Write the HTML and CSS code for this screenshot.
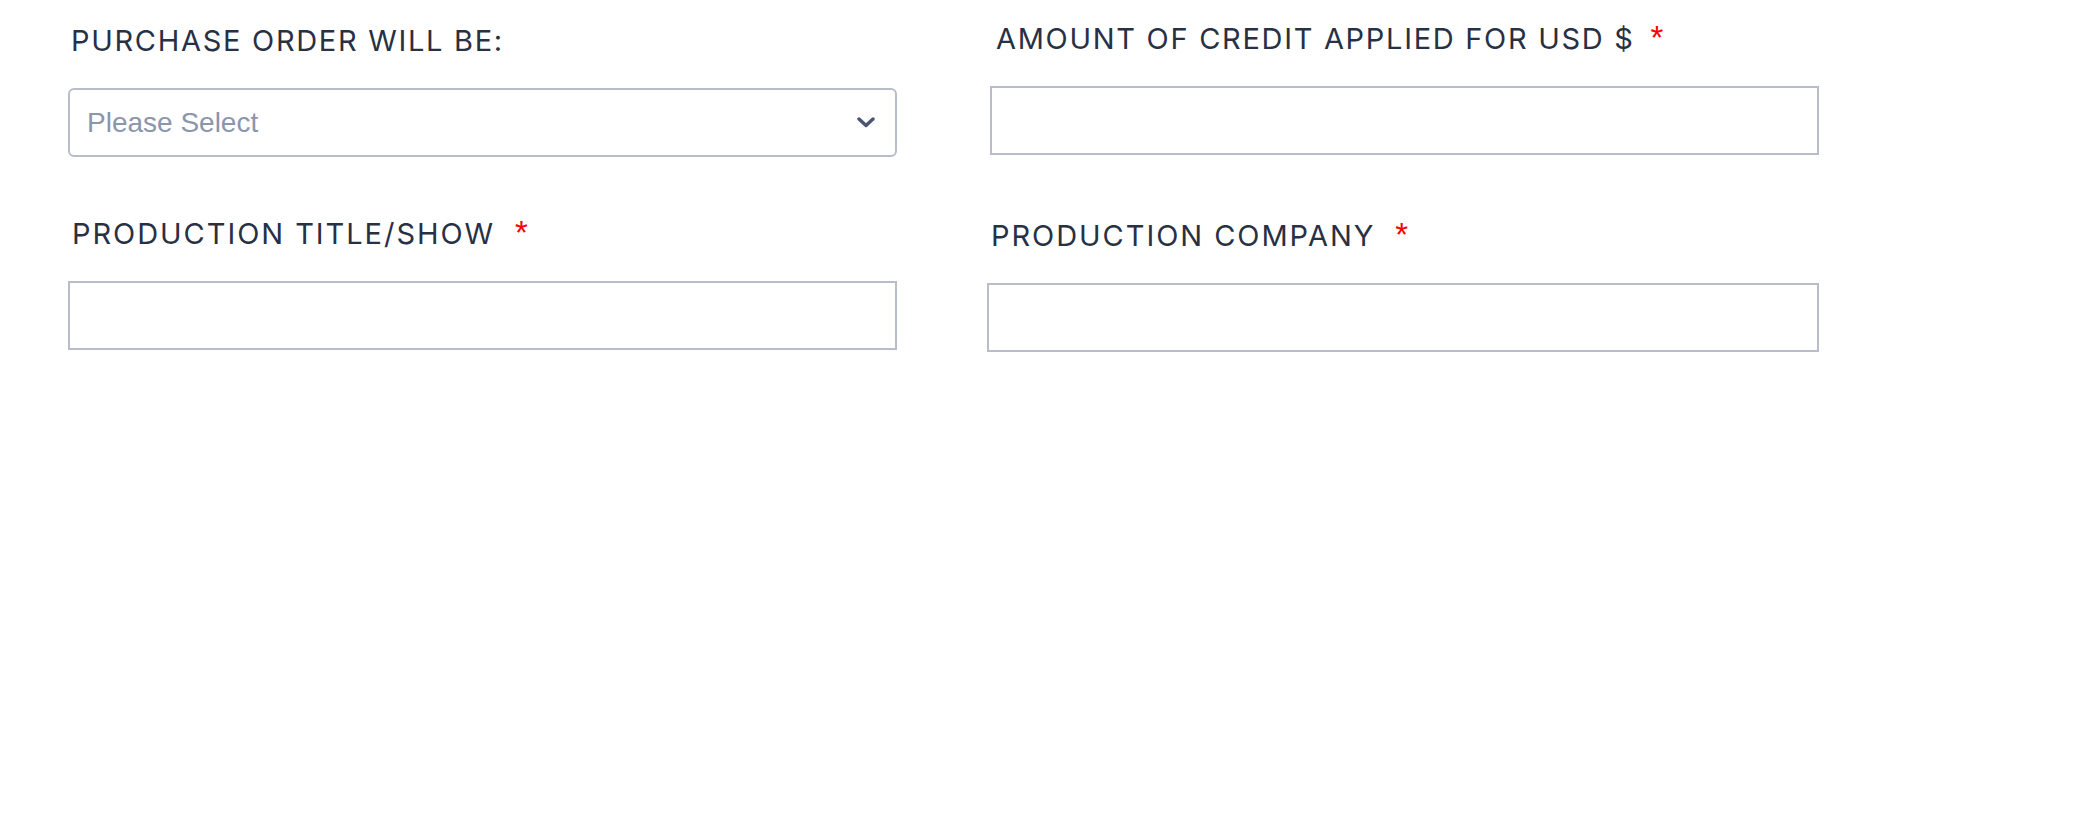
FILE: index.html
```html
<!DOCTYPE html>
<html lang="en">
<head>
<meta charset="utf-8">
<title>Form</title>
<link rel="stylesheet" href="styles.css">
</head>
<body>
<form class="form">
  <div class="col col-left">
    <div class="field">
      <label class="label">PURCHASE ORDER WILL BE:</label>
      <div class="select">
        <span class="placeholder">Please Select</span>
        <svg class="chevron" width="18" height="11" viewBox="0 0 18 11"><path d="M2 2 L9 8.5 L16 2" fill="none" stroke="#4b5570" stroke-width="3.4" stroke-linecap="round" stroke-linejoin="round"/></svg>
      </div>
    </div>
    <div class="field">
      <label class="label label-row2">PRODUCTION TITLE/SHOW<span class="req req-row2">*</span></label>
      <div class="input"></div>
    </div>
  </div>
  <div class="col col-right">
    <div class="field">
      <label class="label label-wide">AMOUNT OF CREDIT APPLIED FOR USD $<span class="req req-tight">*</span></label>
      <div class="input"></div>
    </div>
    <div class="field field-shift">
      <label class="label label-row2">PRODUCTION COMPANY<span class="req req-row2">*</span></label>
      <div class="input"></div>
    </div>
  </div>
</form>
</body>
</html>
```

FILE: styles.css
```css
html, body {
  margin: 0;
  padding: 0;
  background: #ffffff;
}

.form {
  display: flex;
  align-items: flex-start;
}

.col {
  display: flex;
  flex-direction: column;
  width: 829px;
}

.col-left {
  margin-left: 68px;
  padding-top: 24px;
  gap: 59px;
}

.col-right {
  margin-left: 93px;
  padding-top: 21px;
  gap: 63px;
}

.field {
  display: flex;
  flex-direction: column;
  gap: 30px;
}

.field-shift {
  margin-left: -3px;
}

.label {
  font-family: "Inter", "Liberation Sans", sans-serif;
  font-size: 29px;
  line-height: 34px;
  font-weight: 400;
  color: #283044;
  padding-left: 3px;
  letter-spacing: 1.7px;
  white-space: nowrap;
}

.label-wide {
  padding-left: 6px;
}

.label-row2 {
  padding-left: 4px;
  letter-spacing: 1.95px;
}

.req {
  font-family: "Liberation Sans", sans-serif;
  color: #ff0000;
  margin-left: 18px;
  font-size: 33px;
  letter-spacing: 0;
  line-height: 34px;
}

.req-tight {
  margin-left: 16px;
}

.req-row2 {
  margin-left: 20px;
}

.select {
  box-sizing: border-box;
  height: 69px;
  border: 2px solid #b9bdca;
  border-radius: 6px;
  display: flex;
  align-items: center;
  justify-content: space-between;
  padding: 0 20px 0 17px;
}

.placeholder {
  font-family: "Liberation Sans", Arial, sans-serif;
  font-size: 28px;
  color: #8b95ab;
}

.chevron {
  display: block;
}

.input {
  box-sizing: border-box;
  height: 69px;
  border: 2px solid #b9bdca;
  background: #ffffff;
}
```
